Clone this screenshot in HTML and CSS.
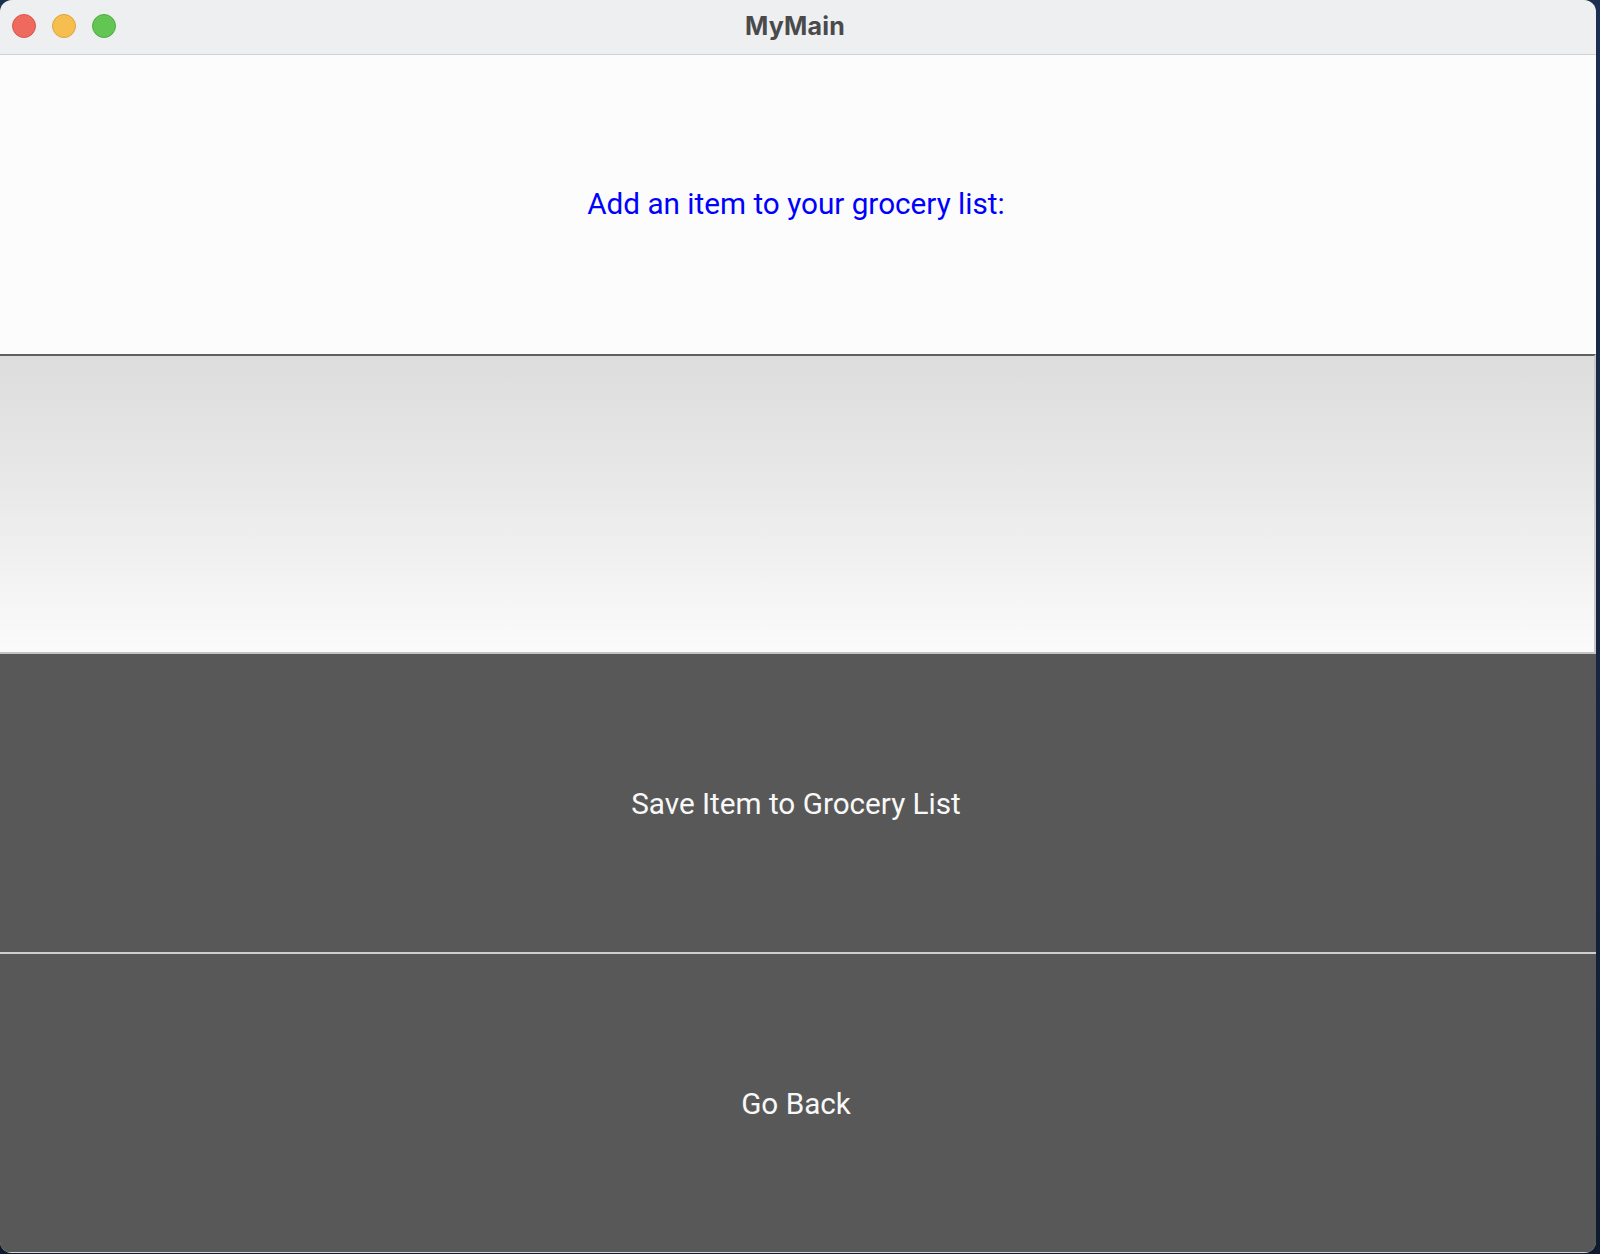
FILE: index.html
```html
<!DOCTYPE html>
<html>
<head>
<meta charset="utf-8">
<title>MyMain</title>
<link rel="stylesheet" href="styles.css">
</head>
<body>
<div class="window">
  <div class="titlebar">
    <div class="lights">
      <span class="light red"></span>
      <span class="light yellow"></span>
      <span class="light green"></span>
    </div>
    <div class="title">MyMain</div>
  </div>
  <div class="content">
    <div class="row label">Add an item to your grocery list:</div>
    <div class="row field"></div>
    <div class="row button first">Save Item to Grocery List</div>
    <div class="row button">Go Back</div>
  </div>
</div>
</body>
</html>
```

FILE: styles.css
```css
html, body {
  margin: 0;
  padding: 0;
  height: 100%;
}
body {
  background: linear-gradient(180deg, #1c2e52 0%, #142440 60%, #0e1a2e 100%);
  overflow: hidden;
}
.window {
  width: 1596px;
  height: 1253px;
  border-radius: 12px;
  overflow: hidden;
  display: flex;
  flex-direction: column;
  background: #585858;
  box-shadow: inset 0 -1px 0 #d9d9d9;
}
.titlebar {
  height: 54px;
  flex: none;
  background: #eeeff1;
  border-bottom: 1px solid #d2d2d4;
  position: relative;
  display: flex;
  align-items: center;
  justify-content: center;
}
.lights {
  position: absolute;
  left: 12px;
  top: 14px;
  display: flex;
  gap: 16px;
}
.light {
  width: 22px;
  height: 22px;
  border-radius: 50%;
  display: block;
}
.red { background: #ee6a5f; border: 1px solid #d9574d; }
.yellow { background: #f6be4f; border: 1px solid #dea33b; }
.green { background: #62c554; border: 1px solid #52ab45; }
.title {
  font-family: "Inter", "Open Sans", sans-serif;
  font-weight: 700;
  font-size: 25px;
  color: #4a4a4c;
  letter-spacing: 0.2px;
  margin-right: 6px;
  margin-bottom: 3px;
}
.content {
  flex: 1;
  display: grid;
  grid-template-rows: 299px 300px 300px 298px;
}
.row {
  display: flex;
  align-items: center;
  justify-content: center;
  font-family: "Roboto", "Liberation Sans", sans-serif;
  font-size: 29.7px;
  box-sizing: border-box;
}
.label {
  background: #fcfcfc;
  color: #0000ff;
  padding-bottom: 2px;
  padding-right: 4px;
}
.field {
  background: linear-gradient(180deg, #dddddd 0%, #e6e6e6 35%, #f1f1f1 70%, #fbfbfb 100%);
  border-top: 2px solid #606060;
  border-bottom: 2px solid #c4c4c4;
  border-right: 2px solid #c9c9c9;
}
.button {
  background: #585858;
  color: #f8f8f8;
  padding-right: 4px;
}
.button.first {
  border-bottom: 2px solid #cfcfcf;
}
```
